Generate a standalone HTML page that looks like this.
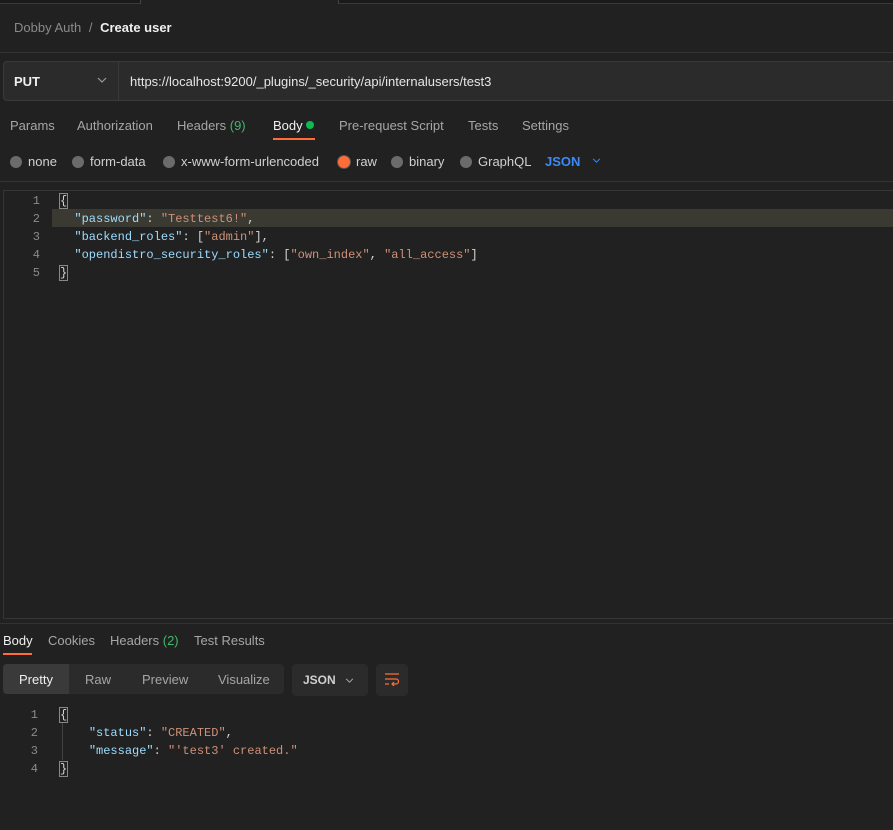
<html><head><style>
body{margin:0;background:#212121;width:893px;height:830px;overflow:hidden;font-family:"Liberation Sans",sans-serif;color:#a6a6a6;font-size:13px;position:relative}
.a{position:absolute;white-space:nowrap}
.mono{font-family:"Liberation Mono","DejaVu Sans Mono",monospace;font-size:12px}
.k{color:#9cdcfe}.s{color:#ce9178}.w{color:#d4d4d4}
.rad{display:inline-block;width:12px;height:12px;border-radius:50%;background:#6b6b6b;vertical-align:-2px;margin-right:6px}
.chev{position:absolute}
</style></head><body>
<div class="a" style="left:0;top:0;width:140px;height:4px;background:#1a1a1a;border-bottom:1px solid #3a3a3a;box-sizing:border-box"></div>
<div class="a" style="left:140px;top:0;width:1px;height:4px;background:#444"></div>
<div class="a" style="left:338px;top:0;width:555px;height:4px;background:#1a1a1a;border-left:1px solid #444;border-bottom:1px solid #3a3a3a;box-sizing:border-box"></div>
<div class="a" style="left:14px;top:20px;color:#8a8a8a">Dobby Auth <span style="margin:0 4px">/</span> <span style="color:#f0f0f0;font-weight:bold">Create user</span></div>
<div class="a" style="left:0;top:52px;width:893px;height:1px;background:#333"></div>
<div class="a" style="left:3px;top:61px;width:890px;height:40px;background:#2b2b2b;border:1px solid #3a3a3a;border-right:none;border-radius:4px 0 0 4px;box-sizing:border-box"></div>
<div class="a" style="left:118px;top:62px;width:1px;height:38px;background:#3a3a3a"></div>
<div class="a" style="left:14px;top:74px;color:#f0f0f0;font-weight:bold">PUT</div>
<svg class="chev" style="left:97px;top:77px" width="10" height="6" viewBox="0 0 10 6" fill="none" stroke="#999" stroke-width="1.2"><path d="M1 1l4 4 4-4"/></svg>
<div class="a" style="left:130px;top:74px;color:#e6e6e6">https://localhost:9200/_plugins/_security/api/internalusers/test3</div>
<div class="a" style="left:10px;top:118px">Params</div>
<div class="a" style="left:77px;top:118px">Authorization</div>
<div class="a" style="left:177px;top:118px">Headers <span style="color:#3fb96b">(9)</span></div>
<div class="a" style="left:273px;top:118px;color:#f0f0f0">Body <span style="display:inline-block;width:8px;height:8px;border-radius:50%;background:#0cbb52;vertical-align:1px"></span></div>
<div class="a" style="left:273px;top:138px;width:42px;height:2px;background:#ff6c37"></div>
<div class="a" style="left:339px;top:118px">Pre-request Script</div>
<div class="a" style="left:468px;top:118px">Tests</div>
<div class="a" style="left:522px;top:118px">Settings</div>
<div class="a" style="left:10px;top:154px;color:#d0d0d0"><span class="rad"></span>none</div>
<div class="a" style="left:72px;top:154px;color:#d0d0d0"><span class="rad"></span>form-data</div>
<div class="a" style="left:163px;top:154px;color:#d0d0d0"><span class="rad"></span>x-www-form-urlencoded</div>
<div class="a" style="left:338px;top:154px;color:#d0d0d0"><span class="rad" style="background:#ff6c37;box-shadow:0 0 0 1px #555"></span>raw</div>
<div class="a" style="left:391px;top:154px;color:#d0d0d0"><span class="rad"></span>binary</div>
<div class="a" style="left:460px;top:154px;color:#d0d0d0"><span class="rad"></span>GraphQL</div>
<div class="a" style="left:545px;top:154px;color:#3d8af7;font-weight:bold">JSON</div>
<svg class="chev" style="left:592px;top:158px" width="9" height="5" viewBox="0 0 10 6" fill="none" stroke="#3d8af7" stroke-width="1.2"><path d="M1 1l4 4 4-4"/></svg>
<div class="a" style="left:0;top:181px;width:893px;height:1px;background:#333"></div>
<div class="a" style="left:3px;top:190px;width:890px;height:429px;border:1px solid #363636;border-right:none;box-sizing:border-box"></div>
<div class="a" style="left:52px;top:209px;width:841px;height:18px;background:#3a3a33"></div>
<div class="a mono" style="left:30px;top:192px;line-height:18px;color:#8a8a8a;text-align:right;width:10px">1<br>2<br>3<br>4<br>5</div>
<div class="a mono w" style="left:60px;top:192px;line-height:18px"><span style="outline:1px solid #888">{</span><br>&nbsp;&nbsp;<span class="k">"password"</span>: <span class="s">"Testtest6!"</span>,<br>&nbsp;&nbsp;<span class="k">"backend_roles"</span>: [<span class="s">"admin"</span>],<br>&nbsp;&nbsp;<span class="k">"opendistro_security_roles"</span>: [<span class="s">"own_index"</span>, <span class="s">"all_access"</span>]<br><span style="outline:1px solid #888">}</span></div>
<div class="a" style="left:0;top:623px;width:893px;height:1px;background:#333"></div>
<div class="a" style="left:3px;top:633px;color:#f0f0f0">Body</div>
<div class="a" style="left:3px;top:653px;width:29px;height:2px;background:#ff6c37"></div>
<div class="a" style="left:48px;top:633px">Cookies</div>
<div class="a" style="left:110px;top:633px">Headers <span style="color:#3fb96b">(2)</span></div>
<div class="a" style="left:194px;top:633px">Test Results</div>
<div class="a" style="left:3px;top:664px;width:281px;height:30px;background:#2b2b2b;border-radius:4px"></div>
<div class="a" style="left:3px;top:664px;width:66px;height:30px;background:#3a3a3a;border-radius:4px 0 0 4px"></div>
<div class="a" style="left:19px;top:672px;color:#f0f0f0">Pretty</div>
<div class="a" style="left:85px;top:672px">Raw</div>
<div class="a" style="left:142px;top:672px">Preview</div>
<div class="a" style="left:218px;top:672px">Visualize</div>
<div class="a" style="left:292px;top:664px;width:76px;height:32px;background:#2b2b2b;border-radius:4px"></div>
<div class="a" style="left:303px;top:673px;color:#d0d0d0;font-weight:bold;font-size:12px">JSON</div>
<svg class="chev" style="left:345px;top:678px" width="9" height="5" viewBox="0 0 10 6" fill="none" stroke="#aaa" stroke-width="1.2"><path d="M1 1l4 4 4-4"/></svg>
<div class="a" style="left:376px;top:664px;width:32px;height:32px;background:#2b2b2b;border-radius:4px"></div>
<svg class="a" style="left:384px;top:672px" width="16" height="16" viewBox="0 0 16 16" fill="none" stroke="#ff6c37" stroke-width="1.2"><path d="M1 2h14M1 7h11a2.5 2.5 0 0 1 0 5H8M10 10l-2 2 2 2M1 12h4"/></svg>
<div class="a mono" style="left:30px;top:706px;line-height:18px;color:#8a8a8a;text-align:right;width:8px">1<br>2<br>3<br>4</div>
<div class="a" style="left:62px;top:722px;width:1px;height:38px;background:#444"></div>
<div class="a mono w" style="left:60px;top:706px;line-height:18px"><span style="outline:1px solid #888">{</span><br>&nbsp;&nbsp;&nbsp;&nbsp;<span class="k">"status"</span>: <span class="s">"CREATED"</span>,<br>&nbsp;&nbsp;&nbsp;&nbsp;<span class="k">"message"</span>: <span class="s">"'test3' created."</span><br><span style="outline:1px solid #888">}</span></div>
</body></html>
